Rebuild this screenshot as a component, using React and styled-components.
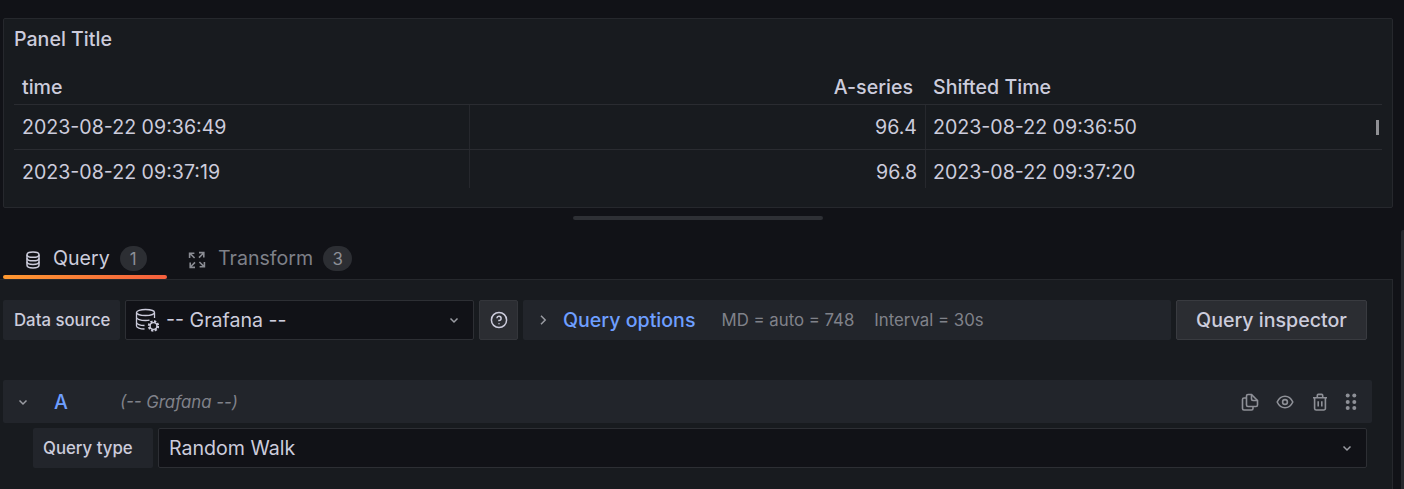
import React from "react";
import styled, { createGlobalStyle } from "styled-components";

const Global = createGlobalStyle`
  html, body { margin: 0; padding: 0; background: #111217; }
  body { width: 1404px; height: 489px; overflow: hidden; font-family: Inter, "Noto Sans", sans-serif; color: #ccccdc; }
  * { box-sizing: border-box; }
`;

const Page = styled.div`
  position: relative;
  width: 1404px;
  height: 489px;
  padding: 18px 0 0 3px;
  overflow: hidden;
`;
const Track = styled.div`
  position: absolute;
  right: 0;
  top: 230px;
  bottom: 0;
  width: 3px;
  background: #26282d;
  border-radius: 2px 0 0 0;
`;
const Panel = styled.section`
  width: 1390px;
  height: 190px;
  background: #181b1f;
  border: 1px solid #26282d;
  border-radius: 2px;
  padding: 0 10px 0 10px;
`;
const PanelTitle = styled.h2`
  margin: 0;
  height: 41px;
  font-size: 19.6px;
  font-weight: 500;
  line-height: 41px;
  color: #ccccdc;
`;
const Table = styled.div`
  width: 1368px;
`;
const Row = styled.div`
  display: grid;
  grid-template-columns: 456px 456px 456px;
  grid-template-rows: 100%;
  height: ${p => p.$h}px;
  border-bottom: ${p => (p.$line ? "1px solid #2a2c31" : "none")};
`;
const Cell = styled.div`
  position: relative;
  padding: 0 ${p => (p.$head && p.$right ? 13 : 8)}px 0 ${p => (p.$third ? 7 : 8)}px;
  font-size: 19.6px;
  font-weight: ${p => (p.$head ? 500 : 400)};
  line-height: ${p => p.$lh}px;
  text-align: ${p => (p.$right ? "right" : "left")};
  white-space: nowrap;
  overflow: hidden;
  border-right: ${p => (p.$sep ? "1px solid #26282d" : "none")};
  color: #ccccdc;
`;
const Grip = styled.span`
  position: absolute;
  right: 3px;
  top: 15px;
  width: 3px;
  height: 15px;
  background: #8f9094;
`;
const Splitter = styled.div`
  display: flex;
  justify-content: center;
  width: 1390px;
  height: 4px;
  margin-top: 8px;
`;
const Handle = styled.div`
  width: 250px;
  height: 4px;
  background: #2e3035;
  border-radius: 2px;
`;
const Tabs = styled.div`
  display: flex;
  height: 59px;
  padding-top: 20px;
  align-items: stretch;
`;
const Tab = styled.div`
  position: relative;
  display: flex;
  align-items: center;
  width: ${p => p.$w}px;
  height: 39px;
  padding: 0 0 3px ${p => p.$pl}px;
  font-size: 19.6px;
  color: ${p => (p.$active ? "#ccccdc" : "#7e8088")};
  &::after {
    content: "";
    display: ${p => (p.$active ? "block" : "none")};
    position: absolute;
    left: 0;
    right: 0;
    bottom: 0;
    height: 4px;
    border-radius: 2px;
    background: linear-gradient(90deg, #ff9830, #f55f3e);
  }
`;
const TabIcon = styled.svg`
  width: 18px;
  height: 18px;
  flex: none;
  margin-right: ${p => p.$mr}px;
  margin-top: 3px;
`;
const Badge = styled.span`
  display: inline-flex;
  align-items: center;
  justify-content: center;
  height: 25px;
  margin-left: 10px;
  margin-top: 1px;
  padding: 0 ${p => p.$px}px;
  border-radius: 13px;
  background: #2c2e33;
  font-size: 16.8px;
  color: #8e9097;
`;
const Content = styled.div`
  width: 1393px;
  height: 210px;
  margin-left: -3px;
  padding-left: 3px;
  background: #181b1f;
  border-top: 1px solid #26282d;
  border-right: 1px solid #26282d;
  padding-top: 20px;
`;
const OptionsRow = styled.div`
  display: flex;
  align-items: stretch;
  height: 40px;
`;
const Label = styled.label`
  display: flex;
  align-items: center;
  width: ${p => p.$w}px;
  height: 40px;
  flex: none;
  padding-left: ${p => p.$pl}px;
  background: #22252b;
  border-radius: 2px;
  font-size: 16.8px;
  font-weight: 500;
  color: #ccccdc;
`;
const Select = styled.div`
  display: flex;
  align-items: center;
  width: ${p => p.$w}px;
  height: 40px;
  flex: none;
  margin-left: 5px;
  padding: 0 ${p => p.$pr}px 0 ${p => p.$pl}px;
  background: #111217;
  border: 1px solid #2d2f34;
  border-radius: 2px;
  font-size: 19.6px;
  color: #ccccdc;
`;
const SelectText = styled.span`
  margin-left: 7px;
`;
const Grow = styled.span`
  flex: 1;
`;
const HelpButton = styled.div`
  display: flex;
  align-items: center;
  justify-content: center;
  width: 39px;
  height: 40px;
  margin-left: 5px;
  flex: none;
  background: #2b2d32;
  border: 1px solid #34363b;
  border-radius: 2px;
`;
const OptionsBar = styled.div`
  display: flex;
  align-items: center;
  width: 648px;
  height: 40px;
  margin-left: 5px;
  flex: none;
  padding-left: 12px;
  background: #22252b;
  border-radius: 2px;
`;
const OptionsTitle = styled.span`
  margin-left: 12px;
  font-size: 19.6px;
  font-weight: 500;
  color: #6e9fff;
`;
const OptionsMeta = styled.span`
  margin-left: ${p => p.$ml}px;
  font-size: 16.8px;
  color: #80828a;
`;
const InspectorButton = styled.button`
  width: 191px;
  height: 40px;
  margin-left: 5px;
  flex: none;
  background: #2b2d32;
  border: 1px solid #393b40;
  border-radius: 2px;
  font-family: inherit;
  font-size: 19.6px;
  font-weight: 500;
  color: #ccccdc;
  padding: 0;
`;
const QueryHeader = styled.div`
  display: flex;
  align-items: center;
  width: 1369px;
  height: 43px;
  margin-top: 40px;
  padding: 0 15px 0 12px;
  background: #22252b;
  border-radius: 2px;
`;
const RefId = styled.span`
  width: 66px;
  margin-left: 23px;
  font-size: 19.6px;
  font-weight: 500;
  color: #6e9fff;
`;
const SourceName = styled.span`
  font-size: 16.8px;
  font-style: italic;
  color: #80828a;
`;
const Actions = styled.div`
  display: flex;
  align-items: center;
  gap: 15px;
`;
const Ico = styled.svg`
  width: ${p => p.$w || p.$s || 20}px;
  height: ${p => p.$s || 20}px;
  flex: none;
  display: block;
`;
const QueryRow = styled.div`
  display: flex;
  margin: 5px 0 0 30px;
`;

const Chevron = ({ color = "#9a9ca3", dir = "down", s = 16 }) => (
  <Ico $s={s} viewBox="0 0 16 16" fill="none" stroke={color} strokeWidth="1.5">
    {dir === "down" ? <path d="M4.5 6.5 8 10l3.5-3.5" /> : <path d="M6 3.8 10.2 8 6 12.2" />}
  </Ico>
);

export default function App() {
  return (
    <Page>
      <Global />
      <Track />
      <Panel>
        <PanelTitle>Panel Title</PanelTitle>
        <Table>
          <Row $h={45} $line>
            <Cell $head $lh={55}>time</Cell>
            <Cell $head $right $lh={55}>A-series</Cell>
            <Cell $head $third $lh={55}>Shifted Time</Cell>
          </Row>
          <Row $h={45} $line>
            <Cell $sep $lh={45}>2023-08-22 09:36:49</Cell>
            <Cell $sep $right $lh={45}>96.4</Cell>
            <Cell $third $lh={45}>2023-08-22 09:36:50<Grip /></Cell>
          </Row>
          <Row $h={38}>
            <Cell $sep $lh={45}>2023-08-22 09:37:19</Cell>
            <Cell $sep $right $lh={45}>96.8</Cell>
            <Cell $third $lh={45}>2023-08-22 09:37:20</Cell>
          </Row>
        </Table>
      </Panel>
      <Splitter><Handle /></Splitter>
      <Tabs>
        <Tab $active $w={164} $pl={21}>
          <TabIcon $mr={11} viewBox="0 0 18 18" fill="none" stroke="#ccccdc" strokeWidth="1.5">
            <ellipse cx="9" cy="3.7" rx="6" ry="2.6" />
            <path d="M3 3.7v10.6c0 1.4 2.7 2.6 6 2.6s6-1.2 6-2.6V3.7" />
            <path d="M3 7.2c0 1.4 2.7 2.6 6 2.6s6-1.2 6-2.6" />
            <path d="M3 10.8c0 1.4 2.7 2.6 6 2.6s6-1.2 6-2.6" />
          </TabIcon>
          Query
          <Badge $px={10}>1</Badge>
        </Tab>
        <Tab $w={190} $pl={21}>
          <TabIcon $mr={12} viewBox="0 0 18 18" fill="none" stroke="#8a8c93" strokeWidth="1.6">
            <path d="M1.6 7V2.2h4.8M2.2 2.6 6.6 7" />
            <path d="M11 1.6h4.8v4.8M15.4 2.2 11 6.6" />
            <path d="M16.4 11v4.8h-4.8M15.8 15.4 11.4 11" />
            <path d="M7 16.4H2.2v-4.8M2.6 15.8 7 11.4" />
          </TabIcon>
          Transform
          <Badge $px={9.5}>3</Badge>
        </Tab>
      </Tabs>
      <Content>
        <OptionsRow>
          <Label $w={117} $pl={11}>Data source</Label>
          <Select $w={349} $pl={9} $pr={11}>
            <Ico $s={24} viewBox="0 0 24 24" fill="none" stroke="#ccccdc" strokeWidth="1.3">
              <ellipse cx="10.5" cy="4.5" rx="9" ry="3" />
              <path d="M1.5 4.5V18c0 1.6 3.6 3 8 3M19.5 4.5V10" />
              <path d="M1.5 9.5c0 1.6 4 3 9 3 1.5 0 3-.1 4-.4M1.5 14.5c0 1.6 3.6 3 8 3" />
              <circle cx="18.5" cy="18" r="4.6" strokeWidth="2.2" strokeDasharray="2.2 1.4" />
              <circle cx="18.5" cy="18" r="3.4" strokeWidth="1.4" />
            </Ico>
            <SelectText>-- Grafana --</SelectText>
            <Grow />
            <Chevron />
          </Select>
          <HelpButton>
            <Ico $s={18} viewBox="0 0 18 18" fill="none" stroke="#ccccdc" strokeWidth="1.5">
              <circle cx="9" cy="9" r="7.6" />
              <path d="M6.9 7.2A2.1 2.1 0 1 1 9 9.5v.8" />
              <path d="M9 12.2v1" />
            </Ico>
          </HelpButton>
          <OptionsBar>
            <Chevron dir="right" />
            <OptionsTitle>Query options</OptionsTitle>
            <OptionsMeta $ml={26}>MD = auto = 748</OptionsMeta>
            <OptionsMeta $ml={20}>Interval = 30s</OptionsMeta>
          </OptionsBar>
          <InspectorButton>Query inspector</InspectorButton>
        </OptionsRow>
        <QueryHeader>
          <Chevron />
          <RefId>A</RefId>
          <SourceName>(-- Grafana --)</SourceName>
          <Grow />
          <Actions>
            <Ico viewBox="0 0 20 20" fill="none" stroke="#8e9097" strokeWidth="1.6">
              <path d="M8 2.5h3.5l6 6V13a1.5 1.5 0 0 1-1.5 1.5H8A1.5 1.5 0 0 1 6.5 13V4A1.5 1.5 0 0 1 8 2.5Z" />
              <path d="M11.5 2.5V7A1.5 1.5 0 0 0 13 8.5h4.5" />
              <path d="M6.5 6H4A1.5 1.5 0 0 0 2.5 7.5v9A1.5 1.5 0 0 0 4 18h7.5a1.5 1.5 0 0 0 1.5-1.5v-2" />
            </Ico>
            <Ico viewBox="0 0 20 20" fill="none" stroke="#8e9097" strokeWidth="1.6">
              <path d="M2.2 10c1.8-3.9 4.5-5.8 7.8-5.8s6 1.9 7.8 5.8c-1.8 3.9-4.5 5.8-7.8 5.8S4 13.9 2.2 10Z" />
              <circle cx="10" cy="10" r="2.4" />
            </Ico>
            <Ico viewBox="0 0 20 20" fill="none" stroke="#8e9097" strokeWidth="1.6">
              <path d="M3 5.7h14M7.3 5.7V3.4a1 1 0 0 1 1-1h3.4a1 1 0 0 1 1 1v2.3" />
              <path d="M4.6 5.7v10.8A1.6 1.6 0 0 0 6.2 18h7.6a1.6 1.6 0 0 0 1.6-1.6V5.7" />
              <path d="M8.2 9.2v5.4M11.8 9.2v5.4" />
            </Ico>
            <Ico $w={12} viewBox="0 0 12 20" fill="#8e9097">
              <circle cx="2.7" cy="3.5" r="2" />
              <circle cx="9.3" cy="3.5" r="2" />
              <circle cx="2.7" cy="10" r="2" />
              <circle cx="9.3" cy="10" r="2" />
              <circle cx="2.7" cy="16" r="2" />
              <circle cx="9.3" cy="16" r="2" />
            </Ico>
          </Actions>
        </QueryHeader>
        <QueryRow>
          <Label $w={120} $pl={10}>Query type</Label>
          <Select $w={1209} $pl={10} $pr={11}>
            Random Walk
            <Grow />
            <Chevron />
          </Select>
        </QueryRow>
      </Content>
    </Page>
  );
}
